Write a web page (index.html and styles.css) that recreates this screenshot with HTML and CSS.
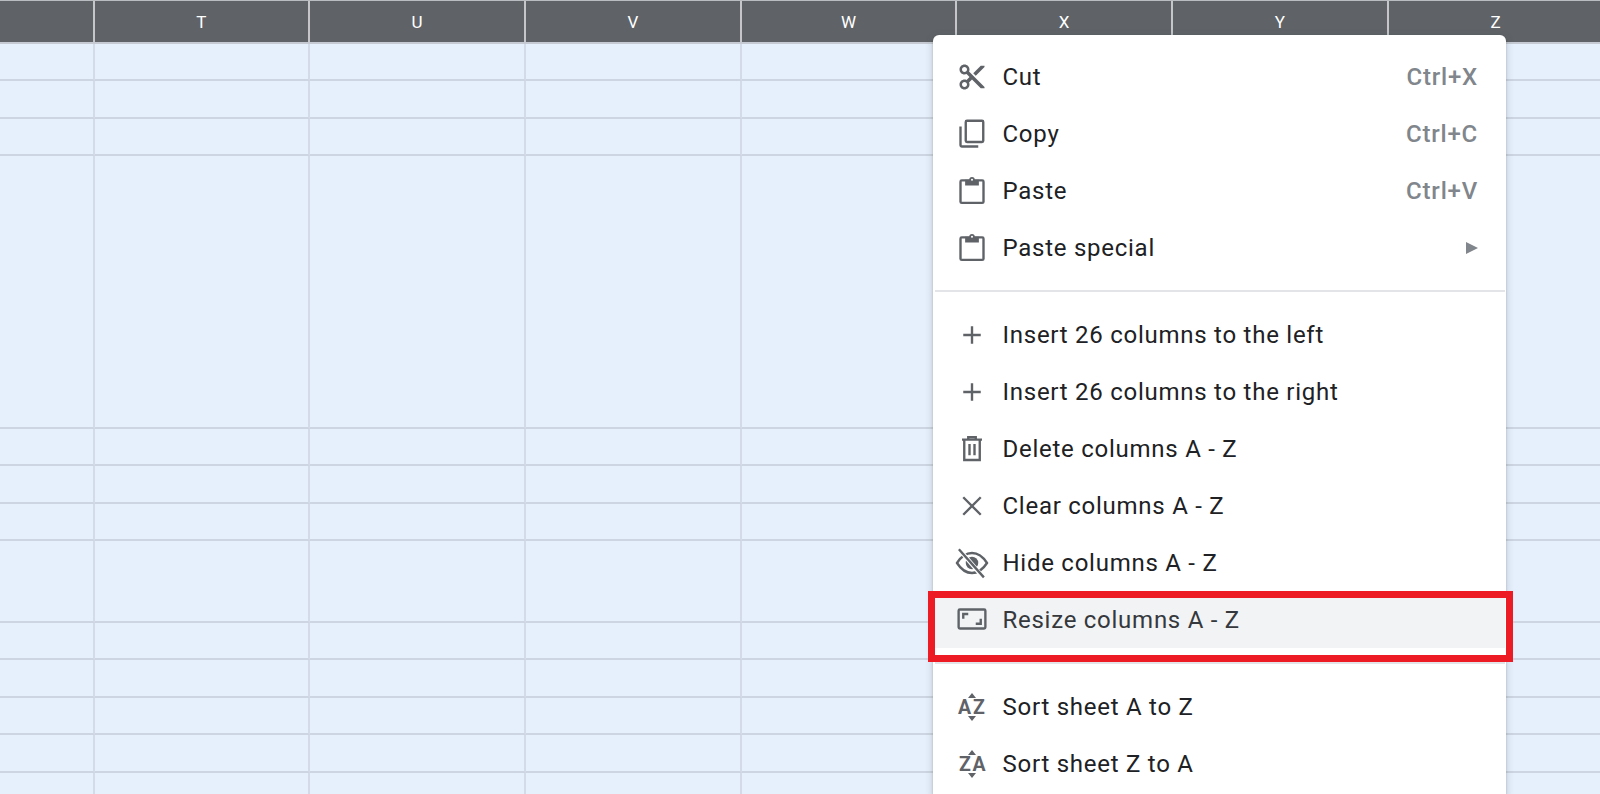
FILE: index.html
```html
<!DOCTYPE html>
<html lang="en">
<head>
<meta charset="utf-8">
<title>Sheet column menu</title>
<link rel="stylesheet" href="styles.css">
</head>
<body>
<main class="sheet">
  <div class="col-header">
    <div class="hcell"></div><div class="hcell">T</div><div class="hcell">U</div><div class="hcell">V</div><div class="hcell">W</div><div class="hcell">X</div><div class="hcell">Y</div><div class="hcell">Z</div>
  </div>
  <div class="grid">
    <div class="row"><i></i><i></i><i></i><i></i><i></i><i></i><i></i><i></i></div>
    <div class="row"><i></i><i></i><i></i><i></i><i></i><i></i><i></i><i></i></div>
    <div class="row"><i></i><i></i><i></i><i></i><i></i><i></i><i></i><i></i></div>
    <div class="row tall"><i></i><i></i><i></i><i></i><i></i><i></i><i></i><i></i></div>
    <div class="row"><i></i><i></i><i></i><i></i><i></i><i></i><i></i><i></i></div>
    <div class="row"><i></i><i></i><i></i><i></i><i></i><i></i><i></i><i></i></div>
    <div class="row"><i></i><i></i><i></i><i></i><i></i><i></i><i></i><i></i></div>
    <div class="row mid"><i></i><i></i><i></i><i></i><i></i><i></i><i></i><i></i></div>
    <div class="row"><i></i><i></i><i></i><i></i><i></i><i></i><i></i><i></i></div>
    <div class="row"><i></i><i></i><i></i><i></i><i></i><i></i><i></i><i></i></div>
    <div class="row"><i></i><i></i><i></i><i></i><i></i><i></i><i></i><i></i></div>
    <div class="row"><i></i><i></i><i></i><i></i><i></i><i></i><i></i><i></i></div>
    <div class="row"><i></i><i></i><i></i><i></i><i></i><i></i><i></i><i></i></div>
  </div>

  <div class="menu">
    <div class="group">
      <div class="item">
        <svg class="ico" viewBox="0 0 24 24"><path class="fill" d="M9.640 7.640c.230-.500.360-1.050.360-1.640 0-2.210-1.790-4-4-4S2 3.790 2 6s1.790 4 4 4c.590 0 1.140-.130 1.640-.360L10 12l-2.360 2.360C7.140 14.130 6.590 14 6 14c-2.210 0-4 1.790-4 4s1.790 4 4 4 4-1.790 4-4c0-.590-.130-1.140-.360-1.640L12 14l7 7h3v-1L9.640 7.640zM6 8c-1.100 0-2-.890-2-2s.900-2 2-2 2 .890 2 2-.900 2-2 2zm0 12c-1.100 0-2-.890-2-2s.900-2 2-2 2 .890 2 2-.900 2-2 2zM19 3l-6 6 2 2 7-7V3z"/></svg>
        <span class="label">Cut</span><span class="key">Ctrl+X</span>
      </div>
      <div class="item">
        <svg class="ico" viewBox="0 0 24 24"><rect class="line" x="7" y="1.400" width="14" height="17" rx="1"/><path class="line" d="M2.800 6v15a1 1 0 0 0 1 1H17"/></svg>
        <span class="label">Copy</span><span class="key">Ctrl+C</span>
      </div>
      <div class="item">
        <svg class="ico" viewBox="0 0 24 24"><rect class="line" x="2.800" y="3.500" width="18.400" height="18" rx="1"/><path class="fill" d="M6.500 7.500V3h3.300a2.200 2.200 0 0 1 4.400 0h3.300v4.500z"/><circle class="dot" cx="12" cy="2.900" r=".8"/></svg>
        <span class="label">Paste</span><span class="key">Ctrl+V</span>
      </div>
      <div class="item">
        <svg class="ico" viewBox="0 0 24 24"><rect class="line" x="2.800" y="3.500" width="18.400" height="18" rx="1"/><path class="fill" d="M6.500 7.500V3h3.300a2.200 2.200 0 0 1 4.400 0h3.300v4.500z"/><circle class="dot" cx="12" cy="2.900" r=".8"/></svg>
        <span class="label">Paste special</span><span class="arrow"></span>
      </div>
    </div>
    <div class="group">
      <div class="item">
        <svg class="ico" viewBox="0 0 24 24"><path class="line" d="M5 12h14M12 5v14"/></svg>
        <span class="label">Insert 26 columns to the left</span>
      </div>
      <div class="item">
        <svg class="ico" viewBox="0 0 24 24"><path class="line" d="M5 12h14M12 5v14"/></svg>
        <span class="label">Insert 26 columns to the right</span>
      </div>
      <div class="item">
        <svg class="ico" viewBox="0 0 24 24"><path class="line" d="M4 4.500h16M9 4.500V2.500h6v2M5.800 4.500v16.300h12.400V4.500M10 8v9M14 8v9"/></svg>
        <span class="label">Delete columns A - Z</span>
      </div>
      <div class="item">
        <svg class="ico" viewBox="0 0 24 24"><path class="line" d="M5 5l14 14M19 5L5 19"/></svg>
        <span class="label">Clear columns A - Z</span>
      </div>
      <div class="item">
        <svg class="ico" viewBox="0 0 24 24"><path class="line" d="M0 12c3.500-5.500 7.500-8 12-8s8.500 2.500 12 8c-3.500 5.500-7.500 8-12 8S3.500 17.500 0 12z"/><circle class="fill" cx="12" cy="12" r="5"/><path class="halo" d="M2.500 2l18 21"/><path class="line" d="M1.500 1l20 22.500"/></svg>
        <span class="label">Hide columns A - Z</span>
      </div>
      <div class="item active">
        <svg class="ico" viewBox="0 0 24 24"><rect class="line" x="1.300" y="3.600" width="21.400" height="15.200" rx="1"/><path class="line" d="M5 11V7.200h4M19 11v4h-4"/></svg>
        <span class="label">Resize columns A - Z</span>
      </div>
    </div>
    <div class="group">
      <div class="item">
        <svg class="ico" viewBox="0 0 30 30"><path class="fill" d="M15 1l4 5h-8zM15 29l4-5h-8z"/><text class="sort-glyph" x="1" y="22">A</text><text class="sort-glyph" x="16" y="22">Z</text></svg>
        <span class="label">Sort sheet A to Z</span>
      </div>
      <div class="item">
        <svg class="ico" viewBox="0 0 30 30"><path class="fill" d="M15 1l4 5h-8zM15 29l4-5h-8z"/><text class="sort-glyph" x="2" y="22">Z</text><text class="sort-glyph" x="15.500" y="22">A</text></svg>
        <span class="label">Sort sheet Z to A</span>
      </div>
    </div>
  </div>
  <div class="annotation"></div>
</main>
</body>
</html>
```

FILE: styles.css
```css
* { box-sizing: border-box; }
html, body { margin: 0; height: 100%; overflow: hidden; background: #e6effc; }
body { font-family: Roboto, "Liberation Sans", sans-serif; }

.sheet { position: relative; width: 1600px; height: 794px; overflow: hidden; }

.col-header {
  display: grid;
  grid-template-columns: 94.600px repeat(7, 215.7px);
  height: 44px;
  background: #5f6368;
  border-top: 1px solid #b9bcc0;
  border-bottom: 2px solid #c6cbd3;
}
.hcell {
  display: flex; align-items: center; justify-content: center;
  color: #fff; font-size: 17px;
  border-right: 2px solid #c4c6c9;
}

.grid { display: flex; flex-direction: column; }
.row {
  display: grid;
  grid-template-columns: 94.600px repeat(7, 215.7px);
  height: 37.500px;
  flex: none;
}
.row:first-child { height: 37px; }
.row.tall { height: 272.500px; }
.row.mid { height: 81.500px; }
.row i {
  display: block;
  border-right: 2px solid #d3dbe8;
  border-bottom: 2px solid #cdd5e2;
}

.menu {
  position: absolute;
  left: 933px; top: 35px; bottom: 0; width: 573px;
  padding: 13px 1px 0 2px;
  background: #fff;
  border-radius: 6px 6px 0 0;
  box-shadow: 0 2px 6px 2px rgba(60, 64, 67, .15), 0 1px 2px rgba(60, 64, 67, .3);
}
.group { border-bottom: 2px solid #e2e4e7; padding-bottom: 14px; margin-bottom: 14px; }
.group:last-child { border-bottom: 0; }

.item {
  display: flex; align-items: center;
  height: 57px;
  padding: 0 27px 0 22px;
  color: #202124;
  font-size: 24px;
  letter-spacing: .74px;
}
.item.active { background: #f1f3f4; color: #35383c; }

.ico { flex: none; width: 30px; height: 30px; margin-right: 15.500px; overflow: visible; }
.ico .fill { fill: #5f6368; }
.ico .dot { fill: #fff; }
.ico .line { fill: none; stroke: #5f6368; stroke-width: 1.900; }
.ico .halo { fill: none; stroke: #fff; stroke-width: 3.400; }
.sort-glyph { font-family: Roboto, sans-serif; font-size: 19.500px; font-weight: 700; fill: #5f6368; letter-spacing: 0; }

.label { flex: 1; white-space: nowrap; }
.key { color: #80868b; font-weight: 500; letter-spacing: .8px; }
.arrow {
  width: 0; height: 0;
  border-left: 12px solid #80868b;
  border-top: 6px solid transparent;
  border-bottom: 6px solid transparent;
}

.annotation {
  position: absolute;
  left: 928px; top: 591px; width: 585px; height: 71px;
  border: 7px solid #ed1c24;
}
```
